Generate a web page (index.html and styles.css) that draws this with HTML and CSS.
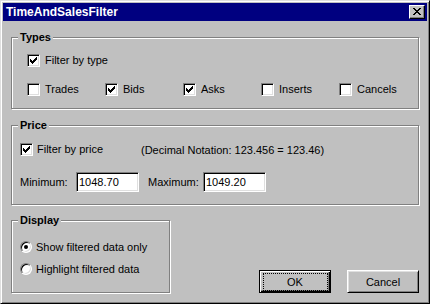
FILE: index.html
```html
<!DOCTYPE html>
<html lang="en">
<head>
    <meta charset="UTF-8">
    <title>TimeAndSalesFilter</title>
    <link rel="stylesheet" href="styles.css">
</head>
<body>
    <div class="window">
        <div class="titlebar">
            <span class="title">TimeAndSalesFilter</span>
            <span class="close-btn">
                <svg width="8" height="7" viewBox="0 0 8 7" shape-rendering="crispEdges">
                    <path d="M0 0h2v1h-2z M6 0h2v1h-2z M1 1h2v1h-2z M5 1h2v1h-2z M2 2h4v1h-4z M3 3h2v1h-2z M2 4h4v1h-4z M1 5h2v1h-2z M5 5h2v1h-2z M0 6h2v1h-2z M6 6h2v1h-2z" fill="#000"/>
                </svg>
            </span>
        </div>

        <div class="dialog">
            <fieldset class="group group-types">
                <legend>Types</legend>
                <div class="group-body">
                    <label class="check">
                        <span class="box"><svg class="tick" width="7" height="7" viewBox="0 0 7 7" shape-rendering="crispEdges"><path d="M6 0h1v1h-1z M5 1h2v1h-2z M0 2h1v1h-1z M4 2h3v1h-3z M0 3h2v1h-2z M3 3h3v1h-3z M0 4h5v1h-5z M1 5h3v1h-3z M2 6h1v1h-1z"/></svg></span>
                        Filter by type
                    </label>
                    <div class="type-list">
                        <label class="check"><span class="box"></span>Trades</label>
                        <label class="check">
                            <span class="box"><svg class="tick" width="7" height="7" viewBox="0 0 7 7" shape-rendering="crispEdges"><path d="M6 0h1v1h-1z M5 1h2v1h-2z M0 2h1v1h-1z M4 2h3v1h-3z M0 3h2v1h-2z M3 3h3v1h-3z M0 4h5v1h-5z M1 5h3v1h-3z M2 6h1v1h-1z"/></svg></span>
                            Bids
                        </label>
                        <label class="check">
                            <span class="box"><svg class="tick" width="7" height="7" viewBox="0 0 7 7" shape-rendering="crispEdges"><path d="M6 0h1v1h-1z M5 1h2v1h-2z M0 2h1v1h-1z M4 2h3v1h-3z M0 3h2v1h-2z M3 3h3v1h-3z M0 4h5v1h-5z M1 5h3v1h-3z M2 6h1v1h-1z"/></svg></span>
                            Asks
                        </label>
                        <label class="check"><span class="box"></span>Inserts</label>
                        <label class="check"><span class="box"></span>Cancels</label>
                    </div>
                </div>
            </fieldset>

            <fieldset class="group group-price">
                <legend>Price</legend>
                <div class="group-body">
                    <div class="price-row">
                        <label class="check check-price">
                            <span class="box"><svg class="tick" width="7" height="7" viewBox="0 0 7 7" shape-rendering="crispEdges"><path d="M6 0h1v1h-1z M5 1h2v1h-2z M0 2h1v1h-1z M4 2h3v1h-3z M0 3h2v1h-2z M3 3h3v1h-3z M0 4h5v1h-5z M1 5h3v1h-3z M2 6h1v1h-1z"/></svg></span>
                            Filter by price
                        </label>
                        <span class="note">(Decimal Notation: 123.456 = 123.46)</span>
                    </div>
                    <div class="range-row">
                        <span class="field-label">Minimum:</span>
                        <input class="text-field" type="text" value="1048.70">
                        <span class="field-label field-label-max">Maximum:</span>
                        <input class="text-field" type="text" value="1049.20">
                    </div>
                </div>
            </fieldset>

            <div class="bottom-row">
                <fieldset class="group group-display">
                    <legend>Display</legend>
                    <div class="group-body">
                        <label class="radio"><span class="dot checked"></span>Show filtered data only</label>
                        <label class="radio"><span class="dot"></span>Highlight filtered data</label>
                    </div>
                </fieldset>
                <div class="buttons">
                    <button class="btn btn-default">OK</button>
                    <button class="btn">Cancel</button>
                </div>
            </div>
        </div>
    </div>
</body>
</html>
```

FILE: styles.css
```css
body {
    margin: 0;
    background: #c0c0c0;
    font-family: "Liberation Sans", Arial, sans-serif;
    font-size: 11px;
    color: #000;
}

.window {
    width: 430px;
    height: 304px;
    box-sizing: border-box;
    padding: 2px;
    background: #c0c0c0;
    border: 1px solid;
    border-color: #dfdfdf #000 #000 #dfdfdf;
    box-shadow: inset 1px 1px 0 #fff, inset -1px -1px 0 #808080;
    display: flex;
    flex-direction: column;
}

.titlebar {
    height: 18px;
    background: #000080;
    color: #fff;
    display: flex;
    align-items: flex-start;
    justify-content: space-between;
}

.title {
    font-size: 12px;
    font-weight: bold;
    line-height: 18px;
    padding-left: 3px;
}

.close-btn {
    width: 16px;
    height: 14px;
    margin: 2px 2px 0 0;
    box-sizing: border-box;
    background: #c0c0c0;
    border: 1px solid;
    border-color: #fff #000 #000 #fff;
    box-shadow: inset -1px -1px 0 #808080;
    display: flex;
    padding: 2px 0 0 3px;
}

.dialog {
    flex: 1;
    padding: 10px 8px 9px 8px;
    display: flex;
    flex-direction: column;
}

/* group boxes */
.group {
    margin: 0;
    padding: 0 0 0 6px;
    min-inline-size: auto;
    border: 1px solid #808080;
    box-shadow: 1px 1px 0 #fff, inset 1px 1px 0 #fff;
}

.group legend {
    padding: 0 2px;
    font-weight: bold;
    line-height: 13px;
    background: #c0c0c0;
}

.group-types .group-body {
    padding: 10px 0 12px 9px;
}

.group-price {
    margin-top: 10px;
}

.group-price .group-body {
    padding: 11px 0 12px 2px;
}

.group-display {
    width: 159px;
    box-sizing: border-box;
}

.group-display .group-body {
    padding: 14px 0 17px 2px;
}

/* checkboxes */
.check {
    display: flex;
    align-items: center;
    height: 13px;
    line-height: 13px;
    gap: 5px;
    white-space: nowrap;
}

.box {
    width: 13px;
    height: 13px;
    box-sizing: border-box;
    padding: 2px;
    background: #fff;
    border: 1px solid;
    border-color: #808080 #fff #fff #808080;
    box-shadow: inset 1px 1px 0 #000, inset -1px -1px 0 #dfdfdf;
    display: flex;
    flex-shrink: 0;
}

.tick {
    fill: #000;
}

.type-list {
    margin-top: 16px;
    display: grid;
    grid-template-columns: repeat(5, 78px);
}

/* price */
.price-row {
    display: flex;
    align-items: center;
    height: 13px;
}

.check-price {
    width: 121px;
    gap: 4px;
}

.range-row {
    margin-top: 16px;
    display: flex;
    align-items: center;
    height: 20px;
}

.field-label {
    width: 56px;
}

.field-label-max {
    width: 55px;
    margin-left: 9px;
}

.text-field {
    width: 63px;
    height: 20px;
    box-sizing: border-box;
    margin: 0;
    padding: 0 2px;
    font-family: inherit;
    font-size: 11px;
    color: #000;
    background: #fff;
    border: 1px solid;
    border-color: #808080 #fff #fff #808080;
    box-shadow: inset 1px 1px 0 #000, inset -1px -1px 0 #dfdfdf;
    outline: none;
}

/* radios */
.radio {
    display: flex;
    align-items: center;
    height: 12px;
    gap: 4px;
    white-space: nowrap;
}

.radio + .radio {
    margin-top: 10px;
}

.dot {
    width: 12px;
    height: 12px;
    box-sizing: border-box;
    border-radius: 50%;
    background: #fff;
    border: 1px solid;
    border-color: #808080 #fff #fff #808080;
    box-shadow: inset 1px 1px 0 #000, inset -1px -1px 0 #dfdfdf;
    display: flex;
    align-items: center;
    justify-content: center;
}

.dot.checked::after {
    content: "";
    width: 4px;
    height: 4px;
    border-radius: 50%;
    background: #000;
}

/* buttons */
.bottom-row {
    margin-top: 9px;
    display: flex;
    align-items: flex-end;
}

.buttons {
    margin-left: auto;
    display: flex;
    gap: 16px;
}

.btn {
    position: relative;
    width: 72px;
    height: 23px;
    margin: 0;
    padding: 0;
    font-family: inherit;
    font-size: 11px;
    color: #000;
    background: #c0c0c0;
    border: 1px solid;
    border-color: #fff #000 #000 #fff;
    box-shadow: inset 1px 1px 0 #dfdfdf, inset -1px -1px 0 #808080;
}

.btn-default {
    border-color: #000;
    box-shadow: inset 1px 1px 0 #fff, inset -1px -1px 0 #000, inset -2px -2px 0 #808080;
}

.btn-default::after {
    content: "";
    position: absolute;
    top: 2px;
    left: 3px;
    right: 2px;
    bottom: 1px;
    border: 1px dotted #000;
}
```
